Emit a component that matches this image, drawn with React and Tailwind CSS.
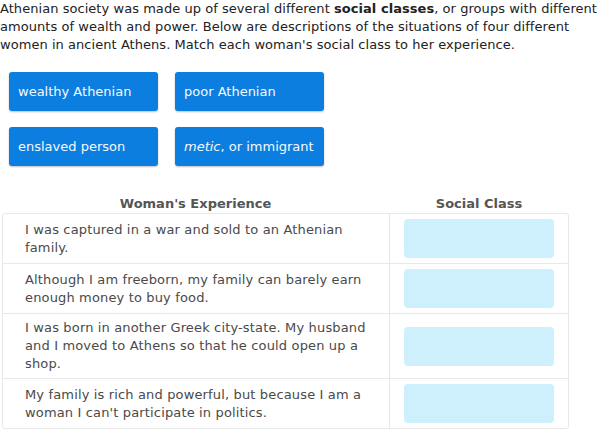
import React from "react";

const rows = [
  "I was captured in a war and sold to an Athenian family.",
  "Although I am freeborn, my family can barely earn enough money to buy food.",
  "I was born in another Greek city-state. My husband and I moved to Athens so that he could open up a shop.",
  "My family is rich and powerful, but because I am a woman I can't participate in politics.",
];

const Tile = ({ children }) => (
  <div className="w-[149px] h-[39px] flex items-center pl-[9px] rounded-[3px] bg-[#0c7ee0] text-[#f4f9ff] text-[13px] shadow-[0_1px_2px_rgba(0,0,0,0.25)] cursor-pointer">
    {children}
  </div>
);

const App = () => {
  return (
    <div className="w-[600px] h-[430px] bg-white overflow-hidden font-['DejaVu_Sans',Verdana,sans-serif]">
      <p className="text-[13px] leading-[18px] tracking-[0.05px] text-[#222]">
        Athenian society was made up of several different <b>social classes</b>, or groups with different amounts of wealth and power. Below are descriptions of the situations of four different women in ancient Athens. Match each woman's social class to her experience.
      </p>

      <div className="mt-[18px] ml-[9px] grid grid-cols-[149px_149px] gap-x-[17px] gap-y-[16px]">
        <Tile>wealthy Athenian</Tile>
        <Tile>poor Athenian</Tile>
        <Tile>enslaved person</Tile>
        <Tile>
          <span><i>metic</i>, or immigrant</span>
        </Tile>
      </div>

      <div className="ml-[2px] mt-[28px] w-[567px]">
        <div className="flex h-[19px] items-center text-[13px] font-bold text-[#555]">
          <div className="w-[387px] text-center">Woman's Experience</div>
          <div className="flex-1 text-center">Social Class</div>
        </div>
        <div className="border border-[#e8e8e8] rounded-[3px]">
          {rows.map((text, i) => (
            <div key={i} className={`flex ${i > 0 ? "border-t border-[#e8e8e8]" : ""}`}>
              <div className="w-[387px] border-r border-[#e8e8e8] pl-[22px] pr-[20px] py-[5px] text-[13px] leading-[18px] tracking-[0.15px] text-[#4a4a4a] flex items-center">
                {text}
              </div>
              <div className="flex-1 flex items-center px-[14px] py-[5px]">
                <div className="w-[150px] h-[39px] rounded-[4px] bg-[#cef0fd]" />
              </div>
            </div>
          ))}
        </div>
      </div>
    </div>
  );
};

export default App;
